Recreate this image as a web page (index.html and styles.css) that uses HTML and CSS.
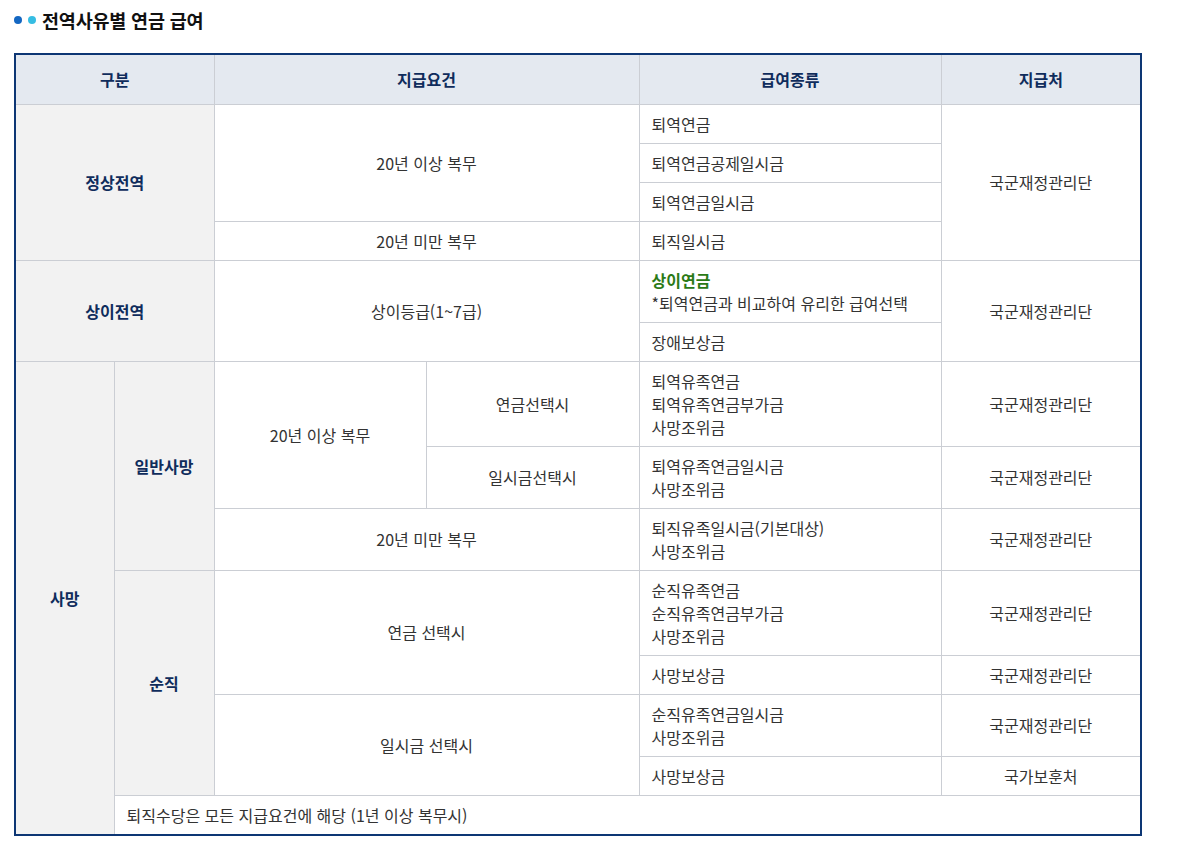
FILE: index.html
```html
<!DOCTYPE html>
<html lang="ko">
<head>
<meta charset="utf-8">
<title>전역사유별 연금 급여</title>
<link rel="stylesheet" href="styles.css">
</head>
<body>
<div class="page">
  <h3 class="title"><span class="dots"><i class="dot dot-a"></i><i class="dot dot-b"></i></span>전역사유별 연금 급여</h3>
  <table class="pension">
    <colgroup>
      <col class="c1"><col class="c2"><col class="c3"><col class="c4"><col class="c5"><col class="c6">
    </colgroup>
    <thead>
      <tr>
        <th colspan="2">구분</th>
        <th colspan="2">지급요건</th>
        <th>급여종류</th>
        <th>지급처</th>
      </tr>
    </thead>
    <tbody>
      <tr>
        <th class="lbl" colspan="2" rowspan="4">정상전역</th>
        <td class="ctr" colspan="2" rowspan="3">20년 이상 복무</td>
        <td class="lft">퇴역연금</td>
        <td class="ctr" rowspan="4">국군재정관리단</td>
      </tr>
      <tr><td class="lft">퇴역연금공제일시금</td></tr>
      <tr><td class="lft">퇴역연금일시금</td></tr>
      <tr>
        <td class="ctr" colspan="2">20년 미만 복무</td>
        <td class="lft">퇴직일시금</td>
      </tr>
      <tr>
        <th class="lbl" colspan="2" rowspan="2">상이전역</th>
        <td class="ctr" colspan="2" rowspan="2">상이등급(1~7급)</td>
        <td class="lft"><strong class="green">상이연금</strong><br>*퇴역연금과 비교하여 유리한 급여선택</td>
        <td class="ctr" rowspan="2">국군재정관리단</td>
      </tr>
      <tr><td class="lft">장애보상금</td></tr>
      <tr>
        <th class="lbl" rowspan="8">사망</th>
        <th class="lbl" rowspan="3">일반사망</th>
        <td class="ctr" rowspan="2">20년 이상 복무</td>
        <td class="ctr">연금선택시</td>
        <td class="lft">퇴역유족연금<br>퇴역유족연금부가금<br>사망조위금</td>
        <td class="ctr">국군재정관리단</td>
      </tr>
      <tr>
        <td class="ctr">일시금선택시</td>
        <td class="lft">퇴역유족연금일시금<br>사망조위금</td>
        <td class="ctr">국군재정관리단</td>
      </tr>
      <tr>
        <td class="ctr" colspan="2">20년 미만 복무</td>
        <td class="lft">퇴직유족일시금(기본대상)<br>사망조위금</td>
        <td class="ctr">국군재정관리단</td>
      </tr>
      <tr>
        <th class="lbl" rowspan="4">순직</th>
        <td class="ctr" colspan="2" rowspan="2">연금 선택시</td>
        <td class="lft">순직유족연금<br>순직유족연금부가금<br>사망조위금</td>
        <td class="ctr">국군재정관리단</td>
      </tr>
      <tr>
        <td class="lft">사망보상금</td>
        <td class="ctr">국군재정관리단</td>
      </tr>
      <tr>
        <td class="ctr" colspan="2" rowspan="2">일시금 선택시</td>
        <td class="lft">순직유족연금일시금<br>사망조위금</td>
        <td class="ctr">국군재정관리단</td>
      </tr>
      <tr>
        <td class="lft">사망보상금</td>
        <td class="ctr">국가보훈처</td>
      </tr>
      <tr>
        <td class="lft note" colspan="5">퇴직수당은 모든 지급요건에 해당 (1년 이상 복무시)</td>
      </tr>
    </tbody>
  </table>
</div>
</body>
</html>
```

FILE: styles.css
```css
html, body {
  margin: 0;
  padding: 0;
  background: #ffffff;
}
body {
  font-family: "Noto Sans CJK KR", "Noto Sans", sans-serif;
  color: #333333;
}
.page {
  padding: 7px 14px 0 14px;
}
.title {
  margin: 0;
  height: 26px;
  display: flex;
  align-items: center;
  font-size: 18.5px;
  font-weight: 700;
  color: #111111;
  letter-spacing: -0.2px;
}
.dots {
  display: inline-flex;
  gap: 6px;
  margin-right: 6px;
}
.dot {
  display: block;
  width: 8px;
  height: 8px;
  border-radius: 50%;
}
.dot-a { background: #1467c2; }
.dot-b { background: #36bde3; }
.pension {
  margin-top: 20px;
  width: 1128px;
  border-collapse: collapse;
  border: 2px solid #0d3674;
  font-size: 16px;
  line-height: 23px;
  table-layout: fixed;
}
.c1 { width: 99px; }
.c2 { width: 100px; }
.c3 { width: 212px; }
.c4 { width: 213px; }
.c5 { width: 302px; }
.c6 { width: 200px; }
.pension th, .pension td {
  border: 1px solid #cbced4;
  padding: 7.5px 12px;
  vertical-align: middle;
}
.pension thead th {
  background: #e4e9f0;
  color: #0f2c5c;
  font-weight: 700;
  padding: 13px 12px 13px;
  text-align: center;
}
.pension .lbl {
  background: #f2f2f2;
  color: #0f2c5c;
  font-weight: 700;
  text-align: center;
}
.ctr { text-align: center; }
.lft { text-align: left; }
.green {
  color: #2b7a16;
  font-weight: 700;
}
```
